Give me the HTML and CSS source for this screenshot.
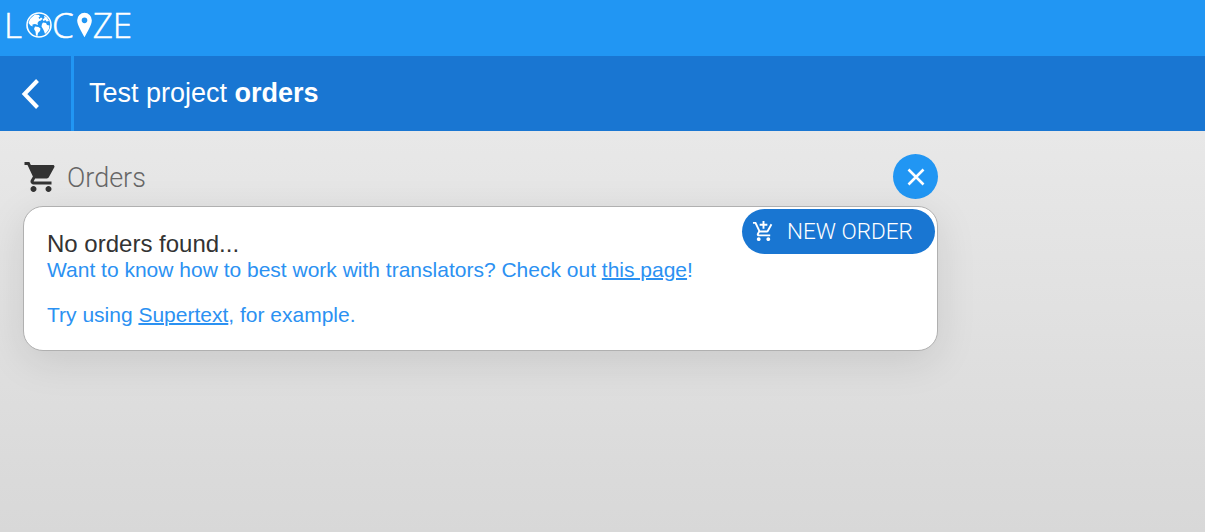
FILE: index.html
```html
<!DOCTYPE html>
<html lang="en">
<head>
<meta charset="utf-8">
<title>Orders</title>
<link rel="stylesheet" href="styles.css">
</head>
<body>
<header class="topbar">
  <div class="logo">
    <span>L</span>
    <svg class="globe" viewBox="0 0 26 26"><circle cx="13" cy="13" r="12" fill="#2196f3" stroke="#fff" stroke-width="1.600"/><path fill="#fff" d="M9 2.500 13 3l1 1.500-1.500 1 1 1.500L15 5.500l1.500 1-1.500 2-2 .5-1.500 2 .5 2-3-1-2.500.5 0 2-2-1L2.500 11 4 7 6 5zM18 3.500l3 2 2 3.500-2.500.5-1-1.500-2 1-1-1.500 2-1.500zM9 14.500l3.500.5 2 1.500-.5 2.500-2 2-.5 3-1.500-.5-.5-4-1.500-2.500zM17 10.500l3 .5 1 2 2.500.5-.5 3.500-2 3-2 2-1-3-1-2-1.500-2.500 .5-2.500z"/></svg>
    <span>C</span>
    <svg class="pin" viewBox="0 0 16 26"><path fill="#fff" fill-rule="evenodd" d="M8 0a7.800 7.800 0 0 1 7.800 7.800C15.800 13 11 20 8 26 5 20 .2 13 .2 7.800A7.800 7.800 0 0 1 8 0zm0 5a3 3 0 1 0 0 6 3 3 0 0 0 0-6z"/></svg>
    <span>ZE</span>
  </div>
</header>
<nav class="subbar">
  <a class="back" href="#" aria-label="Back">
    <svg viewBox="0 0 20 32" width="20" height="32"><path d="M17.500 2.500 4.500 16l13 13.500" fill="none" stroke="#fff" stroke-width="4"/></svg>
  </a>
  <h1 class="title">Test project <b>orders</b></h1>
</nav>
<main class="content">
  <section class="panel">
    <div class="panel-head">
      <h2 class="panel-title">
        <svg viewBox="0 0 24 24" width="36" height="36"><path fill="#333" d="M7 18c-1.100 0-1.990.9-1.990 2S5.900 22 7 22s2-.9 2-2-.9-2-2-2zM1 2v2h2l3.600 7.590-1.350 2.450c-.16.280-.25.610-.25.960 0 1.100.9 2 2 2h12v-2H7.420c-.14 0-.25-.11-.25-.25l.03-.12.900-1.630h7.450c.75 0 1.410-.41 1.750-1.030l3.580-6.490c.08-.14.120-.31.120-.48 0-.55-.45-1-1-1H5.210l-.94-2H1zm16 16c-1.100 0-1.990.9-1.990 2s.89 2 1.990 2 2-.9 2-2-.9-2-2-2z"/></svg>
        <span class="panel-label">Orders</span>
      </h2>
      <button class="close" type="button" aria-label="Close">
        <svg viewBox="0 0 20 20" width="20" height="20"><path d="M2.500 2.500l15 15m0-15l-15 15" stroke="#fff" stroke-width="2.600" fill="none"/></svg>
      </button>
    </div>
    <div class="card">
      <button class="new-order" type="button">
        <svg viewBox="0 0 24 24" width="23" height="23"><path fill="#fff" d="M11 9h2V6h3V4h-3V1h-2v3H8v2h3v3zm-4 9c-1.100 0-1.990.9-1.990 2S5.900 22 7 22s2-.9 2-2-.9-2-2-2zm10 0c-1.100 0-1.990.9-1.990 2s.89 2 1.990 2 2-.9 2-2-.9-2-2-2zm-9.830-3.250.03-.12.900-1.630h7.450c.75 0 1.410-.41 1.750-1.030l3.860-7.010L19.420 4h-.01l-1.100 2-2.760 5H8.530l-.13-.27L6.160 6l-.95-2-.94-2H1v2h2l3.600 7.590-1.350 2.450c-.16.280-.25.610-.25.960 0 1.100.9 2 2 2h12v-2H7.420c-.13 0-.25-.11-.25-.25z"/></svg>
        <span class="new-order-label">NEW ORDER</span>
      </button>
      <p class="empty">No orders found...</p>
      <p class="hint">Want to know how to best work with translators? Check out <a href="#">this page</a>!</p>
      <p class="hint hint-gap">Try using <a href="#">Supertext</a>, for example.</p>
    </div>
  </section>
</main>
</body>
</html>
```
FILE: styles.css
```css
* { box-sizing: border-box; }
html, body { height: 100%; }
body {
  margin: 0;
  display: flex;
  flex-direction: column;
  overflow: hidden;
  font-family: "Liberation Sans", Arial, sans-serif;
  background: #e0e0e0;
}
.topbar {
  height: 56px;
  flex: none;
  background: #2196f3;
  padding: 10px 0 0 4px;
}
.logo {
  display: flex;
  align-items: center;
  height: 30px;
  color: #fff;
  font-family: "Open Sans", sans-serif;
  font-weight: 300;
  font-size: 35px;
  line-height: 30px;
  -webkit-text-stroke: .5px #fff;
}
.globe { width: 26px; height: 26px; margin: 0 0 0 4px; }
.pin { width: 15px; height: 26px; margin: 0 1px 0 3px; }
.subbar {
  height: 75px;
  flex: none;
  display: flex;
  background: #1976d2;
}
.back {
  width: 74px;
  display: flex;
  align-items: center;
  padding-left: 20px;
  border-right: 3px solid #2196f3;
}
.title {
  margin: 0 0 0 15px;
  align-self: center;
  color: #fff;
  font-size: 27px;
  font-weight: 400;
}
.title b { font-weight: 700; }
.content {
  flex: 1;
  padding: 23px 0 0 23px;
  background: linear-gradient(#e8e8e8, #d8d8d8);
}
.panel { width: 915px; }
.panel-head {
  height: 52px;
  display: flex;
  justify-content: space-between;
}
.panel-title {
  margin: 0;
  height: 45px;
  display: flex;
  align-items: center;
  gap: 8px;
  color: #666;
  font-family: Roboto, sans-serif;
  font-weight: 300;
  font-size: 27px;
}
.panel-label { padding-top: 2px; }
.close {
  width: 45px;
  height: 45px;
  padding: 0;
  border: 0;
  border-radius: 50%;
  background: #2196f3;
  display: flex;
  align-items: center;
  justify-content: center;
}
.card {
  position: relative;
  height: 145px;
  padding: 24px 23px;
  background: #fff;
  border: 1px solid #b0b0b0;
  border-radius: 20px;
  box-shadow: 0 10px 40px rgba(0, 0, 0, .1);
}
.new-order {
  position: absolute;
  top: 2px;
  right: 2px;
  width: 193px;
  height: 45px;
  padding: 0 0 0 10px;
  display: flex;
  align-items: center;
  gap: 12px;
  border: 0;
  border-radius: 23px;
  background: #1976d2;
  color: #fff;
  font-family: Roboto, sans-serif;
  font-weight: 300;
  font-size: 22.500px;
}
.new-order-label { padding-bottom: 2px; }
.empty {
  margin: 0;
  color: #333;
  font-size: 24px;
  line-height: 26px;
}
.hint {
  margin: 0;
  color: #2b91f2;
  font-size: 21px;
  line-height: 26px;
}
.hint-gap { margin-top: 19px; }
.hint a {
  color: inherit;
  text-decoration-thickness: 2px;
}
```
